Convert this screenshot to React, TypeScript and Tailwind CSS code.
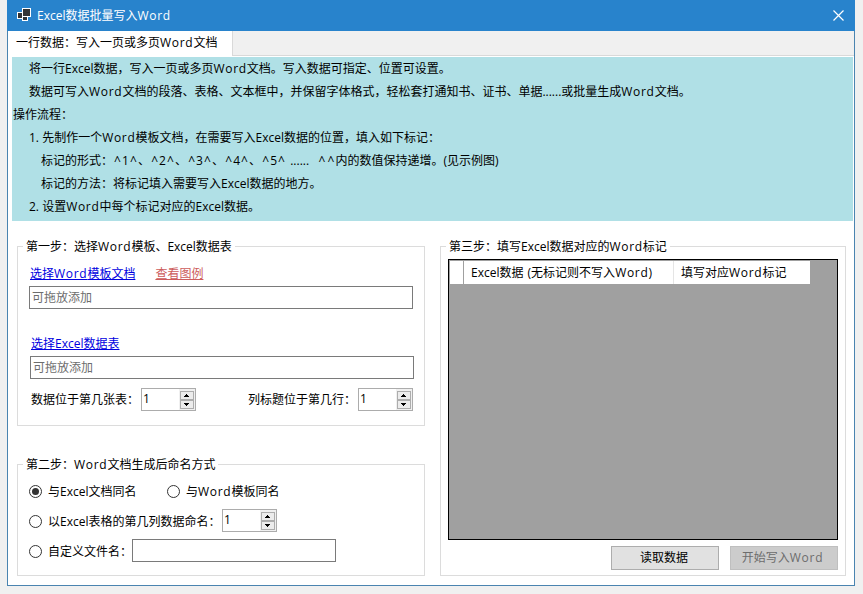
import type { ReactNode } from "react";

function Label({ text }: { text: string }) {
  return (
    <>
      {text.split(/(Word|\^)/).map((part, i) =>
        part === "Word" ? (
          <span key={i} className="tracking-[0.7px]">{part}</span>
        ) : part === "^" ? (
          <span key={i} className="px-[1.1px]">{part}</span>
        ) : (
          part
        ),
      )}
    </>
  );
}

function Group({ title, className, children }: { title: string; className: string; children: ReactNode }) {
  return (
    <section className={`border border-[#dcdcdc] ${className}`}>
      <h2 className="-mt-[9px] ml-[5px] h-[17px] w-fit bg-white px-[3px] leading-[17px] whitespace-nowrap"><Label text={title} /></h2>
      {children}
    </section>
  );
}

function Arrow({ down }: { down?: boolean }) {
  return (
    <div className="flex h-[9px] w-[14px] items-center justify-center border border-[#adadad] bg-[#ececec]">
      <svg width="6" height="3" viewBox="0 0 6 3" shapeRendering="crispEdges">
        <path d={down ? "M0 0H5V1H4V2H3V3H2V2H1V1H0Z" : "M2 0H3V1H4V2H5V3H0V2H1V1H2Z"} />
      </svg>
    </div>
  );
}

function Spinner() {
  return (
    <div className="flex h-[23px] w-[55px] shrink-0 justify-between border border-[#acacac] bg-white">
      <span className="pl-px leading-[19px]">1</span>
      <div className="flex w-[16px] flex-col items-center justify-center bg-[#f0f0f0]">
        <Arrow />
        <Arrow down />
      </div>
    </div>
  );
}

function Radio({ checked }: { checked?: boolean }) {
  return (
    <span className="flex size-[13px] shrink-0 items-center justify-center rounded-full border border-[#333] bg-white">
      {checked && <span className="size-[7px] rounded-full bg-[#333]" />}
    </span>
  );
}

export default function App() {
  return (
    <div className="h-[594px] w-[863px] overflow-hidden bg-[#f0f0f0] pl-[7px] font-['Open_Sans','Noto_Sans_CJK_SC',sans-serif] text-[12px] text-black">
      <div className="flex h-[586px] w-[848px] flex-col border border-t-0 border-[#4a84b0] bg-white whitespace-nowrap">
        <header className="-mx-px flex h-[31px] shrink-0 items-center bg-[#2883cc] pl-[10px] text-white">
          <svg width="14" height="13" viewBox="0 0 14 13" shapeRendering="crispEdges" className="-mt-[2px]">
            <path d="M.5 4.5H6.5V10.5H.5Z" fill="#333" stroke="#fff" />
            <path d="M5.5 7.5H10.5V12.5H5.5Z" fill="#333" stroke="#fff" />
            <path d="M5.5 .5H13.5V8.5H5.5Z" fill="#333" stroke="#fff" />
          </svg>
          <span className="ml-[6px] grow"><Label text="Excel数据批量写入Word" /></span>
          <svg width="11" height="11" viewBox="0 0 11 11" className="mr-[11px]">
            <path d="M.5 .5L10.5 10.5M10.5 .5L.5 10.5" stroke="#fff" strokeWidth="1.2" fill="none" />
          </svg>
        </header>
        <nav className="flex h-[25px] shrink-0 bg-[#f0f0f0]">
          <div className="w-[225px] border-r border-[#d9d9d9] bg-white pl-[8px] leading-[24px]"><Label text="一行数据：写入一页或多页Word文档" /></div>
          <div className="grow border-b border-[#d9d9d9]" />
        </nav>
        <div className="mt-px ml-[4px] h-[164px] w-[841px] shrink-0 bg-[#b0e0e6] leading-[23px]">
          <p className="pl-[17px]"><Label text="将一行Excel数据，写入一页或多页Word文档。写入数据可指定、位置可设置。" /></p>
          <p className="pl-[17px]"><Label text="数据可写入Word文档的段落、表格、文本框中，并保留字体格式，轻松套打通知书、证书、单据......或批量生成Word文档。" /></p>
          <p className="pl-px">操作流程：</p>
          <p className="pl-[17px]"><Label text="1. 先制作一个Word模板文档，在需要写入Excel数据的位置，填入如下标记：" /></p>
          <p className="pl-[29px] whitespace-pre [word-spacing:1px]"><Label text="标记的形式：^1^、^2^、^3^、^4^、^5^ ......  ^^内的数值保持递增。(见示例图)" /></p>
          <p className="pl-[29px]">标记的方法：将标记填入需要写入Excel数据的地方。</p>
          <p className="pl-[17px]"><Label text="2. 设置Word中每个标记对应的Excel数据。" /></p>
        </div>
        <main className="mt-[25px] flex items-start pl-[9px]">
          <div className="flex flex-col gap-[38px]">
            <Group title="第一步：选择Word模板、Excel数据表" className="h-[180px] w-[408px]">
              <div className="mt-[9px] flex h-[20px] items-center pl-[12px]">
                <a className="text-[#0000e0] underline"><Label text="选择Word模板文档" /></a>
                <a className="ml-[20px] text-[#cd5c5c] underline">查看图例</a>
              </div>
              <div className="mt-[2px] ml-[11px] h-[23px] w-[384px] border border-[#7a7a7a] pl-[2px] leading-[21px] text-[#6d6d6d]">可拖放添加</div>
              <div className="mt-[25px] flex h-[20px] items-center pl-[13px]">
                <a className="text-[#0000e0] underline">选择Excel数据表</a>
              </div>
              <div className="mt-[2px] ml-[12px] h-[23px] w-[384px] border border-[#7a7a7a] pl-[2px] leading-[21px] text-[#6d6d6d]">可拖放添加</div>
              <div className="mt-[9px] flex h-[23px] items-center pl-[13px]">
                <span className="w-[110px]">数据位于第几张表：</span>
                <Spinner />
                <span className="ml-[52px] w-[110px]">列标题位于第几行：</span>
                <Spinner />
              </div>
            </Group>
            <Group title="第二步：Word文档生成后命名方式" className="h-[112px] w-[408px]">
              <div className="mt-[9px] flex h-[19px] items-center pl-[11px]">
                <Radio checked />
                <span className="ml-[6px] w-[119px] pt-px">与Excel文档同名</span>
                <Radio />
                <span className="ml-[6px] pt-px"><Label text="与Word模板同名" /></span>
              </div>
              <div className="mt-[8px] flex h-[23px] items-center pl-[11px]">
                <span className="mt-[2px]"><Radio /></span>
                <span className="ml-[6px] w-[174px] pt-[2px]">以Excel表格的第几列数据命名：</span>
                <Spinner />
              </div>
              <div className="mt-[7px] flex h-[23px] items-center pl-[11px]">
                <span className="mt-[2px]"><Radio /></span>
                <span className="ml-[6px] w-[84px] pt-[2px]">自定义文件名：</span>
                <div className="h-[23px] w-[204px] border border-[#7a7a7a]" />
              </div>
            </Group>
          </div>
          <Group title="第三步：填写Excel数据对应的Word标记" className="ml-[15px] h-[330px] w-[406px]">
            <div className="mt-[4px] ml-[7px] h-[281px] w-[390px] border border-black bg-[#a0a0a0] pt-px pl-px">
              <div className="flex h-[23px] w-[360px] bg-white leading-[23px]">
                <div className="w-[14px] border-r border-[#a0a0a0]" />
                <div className="w-[210px] border-r border-[#e5e5e5] pl-[7px] [word-spacing:1px]"><Label text="Excel数据 (无标记则不写入Word)" /></div>
                <div className="pl-[7px]"><Label text="填写对应Word标记" /></div>
              </div>
            </div>
            <div className="mt-[6px] ml-[170px] flex gap-[11px] text-center leading-[22px]">
              <button className="h-[24px] w-[108px] border border-[#adadad] bg-[#e1e1e1] pr-[2px]">读取数据</button>
              <button className="h-[24px] w-[108px] border border-[#bfbfbf] bg-[#cccccc] pr-[3px] text-[#6d6d6d]"><Label text="开始写入Word" /></button>
            </div>
          </Group>
        </main>
      </div>
    </div>
  );
}
